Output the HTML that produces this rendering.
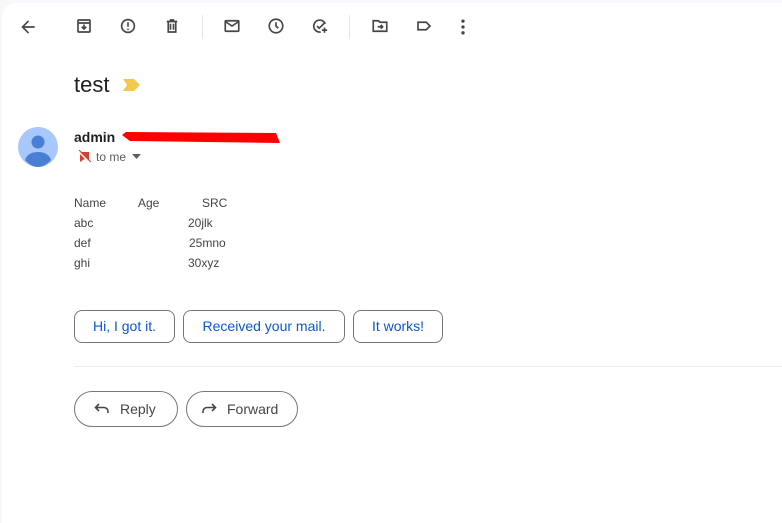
<!DOCTYPE html>
<html><head><meta charset="utf-8"><style>
body{margin:0;width:782px;height:506px;background:#f6f8fc;font-family:"Liberation Sans",Arial,sans-serif;overflow:hidden;position:relative}
.card{position:absolute;left:2px;top:3px;width:800px;height:520px;background:#fff;border-radius:14px 0 0 0}
.ic{position:absolute;top:17px}
.div{position:absolute;top:15px;width:1px;height:24px;background:#e6e6e6}
.t{position:absolute;white-space:nowrap}
.btn{position:absolute;top:310px;height:33px;border:1px solid #747775;border-radius:8px;box-sizing:border-box;color:#0b57d0;font-size:14px;line-height:31px;text-align:center}
.rb{position:absolute;top:391px;height:36px;border:1px solid #747775;border-radius:18px;box-sizing:border-box;color:#444746;font-size:14px;line-height:34px}
.tb{font-size:12px;color:#444}
</style></head><body>
<div class="card"></div>
<svg class="ic" style="left:18px" width="20" height="20" viewBox="0 0 24 24"><path d="M20 11H7.8l5.6-5.6L12 4l-8 8 8 8 1.4-1.4L7.8 13H20z" fill="#444746"/></svg>
<svg class="ic" style="left:75px" width="18" height="18" viewBox="0 0 24 24" fill="none" stroke="#444746" stroke-width="2.2"><rect x="4" y="4" width="16" height="16" rx="1"/><path d="M4 8h16M12 10v6M9 13l3 3 3-3"/></svg>
<svg class="ic" style="left:119px" width="18" height="18" viewBox="0 0 24 24" fill="none" stroke="#444746" stroke-width="2.2"><circle cx="12" cy="12" r="8.5"/><path d="M12 7v6M12 15.5v2"/></svg>
<svg class="ic" style="left:163px" width="18" height="18" viewBox="0 0 24 24" fill="none" stroke="#444746" stroke-width="2.2"><path d="M5 6h14M9 4h6M7 6v14h10V6M10 9v8M14 9v8"/></svg>
<div class="div" style="left:202px"></div>
<svg class="ic" style="left:223px" width="18" height="18" viewBox="0 0 24 24" fill="none" stroke="#444746" stroke-width="2.2"><rect x="3" y="5" width="18" height="14" rx="1"/><path d="M3 6l9 6 9-6"/></svg>
<svg class="ic" style="left:267px" width="18" height="18" viewBox="0 0 24 24" fill="none" stroke="#444746" stroke-width="2.2"><circle cx="12" cy="12" r="9"/><path d="M12 7v5l3 3"/></svg>
<svg class="ic" style="left:311px" width="18" height="18" viewBox="0 0 24 24" fill="none" stroke="#444746" stroke-width="2.2"><path d="M19 9A8 8 0 1 0 13 20"/><path d="M8 12l3 3 8-8M18 14v7M14.5 17.5h7"/></svg>
<div class="div" style="left:349px"></div>
<svg class="ic" style="left:371px" width="18" height="18" viewBox="0 0 24 24" fill="none" stroke="#444746" stroke-width="2.2"><path d="M3 5h7l2 2h9v12H3z"/><path d="M9 13h6M13 10.5l2.5 2.5-2.5 2.5"/></svg>
<svg class="ic" style="left:415px" width="18" height="18" viewBox="0 0 24 24" fill="none" stroke="#444746" stroke-width="2.2"><path d="M4 7h11l5 5-5 5H4z"/></svg>
<svg class="ic" style="left:453px" width="20" height="20" viewBox="0 0 24 24" fill="#444746"><circle cx="12" cy="5" r="2"/><circle cx="12" cy="12" r="2"/><circle cx="12" cy="19" r="2"/></svg>
<div class="t" style="left:74px;top:72px;font-size:22px;color:#1f1f1f">test</div>
<svg style="position:absolute;left:123px;top:79px" width="17" height="12" viewBox="0 0 17 12"><path d="M0 0h11l6 6-6 6H0l4-6z" fill="#f2c94c"/></svg>
<svg style="position:absolute;left:18px;top:127px" width="40" height="40" viewBox="0 0 40 40"><circle cx="20" cy="20" r="20" fill="#a8c7fa"/><circle cx="20" cy="15" r="6.5" fill="#4a7fd6"/><path d="M7 33c2-6 7-8 13-8s11 2 13 8c-3.5 4-8 7-13 7s-9.5-3-13-7z" fill="#4a7fd6"/></svg>
<div class="t" style="left:74px;top:129px;font-size:14px;font-weight:bold;color:#1f1f1f">admin</div>
<svg style="position:absolute;left:120px;top:127px" width="162" height="18" viewBox="0 0 162 18"><path d="M2 8l4-3 150 1 4 10-150-2z" fill="#f00"/></svg>
<svg style="position:absolute;left:78px;top:150px" width="13" height="13" viewBox="0 0 13 13"><path d="M2 2h9v10l-4.5-3-4.5 3z" fill="#d0412f"/><path d="M0 1l12 12" stroke="#fff" stroke-width="1.5"/><path d="M1 0l12 12" stroke="#d0412f" stroke-width="1"/></svg>
<div class="t" style="left:96px;top:150px;font-size:12px;color:#5e5e5e">to me</div>
<svg style="position:absolute;left:132px;top:154px" width="9" height="6"><path d="M0 0h9L4.5 5z" fill="#5e5e5e"/></svg>
<div class="t tb" style="left:74px;top:196px">Name</div>
<div class="t tb" style="left:138px;top:196px">Age</div>
<div class="t tb" style="left:202px;top:196px">SRC</div>
<div class="t tb" style="left:74px;top:216px">abc</div><div class="t tb" style="left:188px;top:216px">20jlk</div>
<div class="t tb" style="left:74px;top:236px">def</div><div class="t tb" style="left:189px;top:236px">25mno</div>
<div class="t tb" style="left:74px;top:256px">ghi</div><div class="t tb" style="left:188px;top:256px">30xyz</div>
<div class="btn" style="left:74px;width:101px">Hi, I got it.</div>
<div class="btn" style="left:183px;width:162px">Received your mail.</div>
<div class="btn" style="left:353px;width:90px">It works!</div>
<div style="position:absolute;left:74px;top:366px;width:710px;height:1px;background:#ececec"></div>
<div class="rb" style="left:74px;width:104px"><svg style="position:absolute;left:19px;top:10px" width="16" height="14" viewBox="0 0 16 14" fill="none" stroke="#444746" stroke-width="1.6"><path d="M5 2L1.5 5.5 5 9M1.5 5.5H10a4 4 0 0 1 4 4V11"/></svg><span style="position:absolute;left:45px">Reply</span></div>
<div class="rb" style="left:186px;width:112px"><svg style="position:absolute;left:14px;top:10px" width="16" height="14" viewBox="0 0 16 14" fill="none" stroke="#444746" stroke-width="1.6"><path d="M11 2l3.5 3.5L11 9M14.5 5.5H6a4 4 0 0 0-4 4V11"/></svg><span style="position:absolute;left:40px">Forward</span></div>
</body></html>
